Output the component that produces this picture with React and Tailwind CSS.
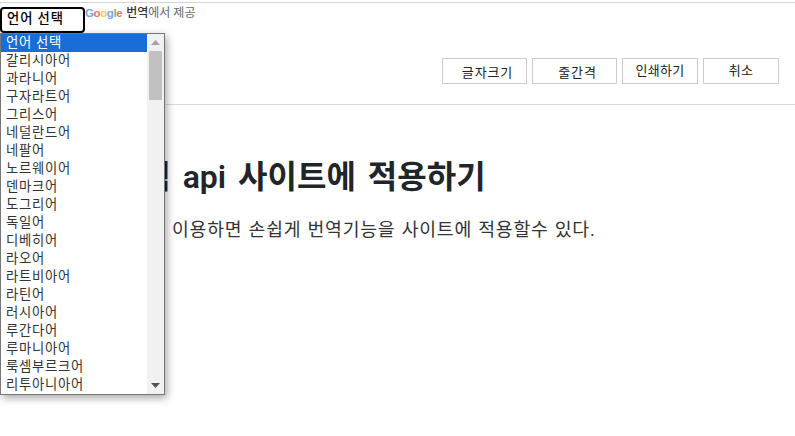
import React from 'react';

const languages = [
  '갈리시아어', '과라니어', '구자라트어', '그리스어', '네덜란드어', '네팔어', '노르웨이어', '덴마크어',
  '도그리어', '독일어', '디베히어', '라오어', '라트비아어', '라틴어', '러시아어', '루간다어', '루마니아어',
  '룩셈부르크어', '리투아니아어',
];

const buttons = [
  { label: '글자크기', width: 'w-[85px]', extra: 'pl-[6px] pt-[2px] tracking-[0.9px]' },
  { label: '줄간격', width: 'w-[85px]', extra: 'pl-[6px] pt-[2px] tracking-[0.9px]' },
  { label: '인쇄하기', width: 'w-[76px]', extra: 'pb-[2px] tracking-[0.3px]' },
  { label: '취소', width: 'w-[76px]', extra: 'pb-[2px] tracking-[0.3px]' },
];

const App = () => {
  return (
    <div className="relative w-[795px] h-[436px] overflow-hidden bg-white text-[#212529] font-['Roboto','Noto_Sans_CJK_KR',sans-serif]">
      {/* Google translate bar */}
      <div className="h-[33px] pt-[2px]">
        <div className="border-t border-[#d4d4d4] flex items-start pt-[4px]">
          <div className="w-[85px] h-[26px] border-2 border-black rounded-[4px] pl-[5px] text-[13.33px] leading-[20px] font-medium tracking-[0.9px] text-black">
            언어 선택
          </div>
          <div className="flex items-center h-[12px] text-[12px] leading-[12px] text-[#666]">
            <span className="text-[11.5px] font-bold tracking-[-0.4px] font-['Liberation_Sans',sans-serif] opacity-75">
              <span className="text-[#4285f4]">G</span>
              <span className="text-[#ea4335]">o</span>
              <span className="text-[#fbbc05]">o</span>
              <span className="text-[#4285f4]">g</span>
              <span className="text-[#34a853]">l</span>
              <span className="text-[#ea4335]">e</span>
            </span>
            <span className="ml-[4px] font-medium text-[#333]">번역</span>
            <span>에서 제공</span>
          </div>
        </div>
      </div>

      {/* Toolbar */}
      <div className="h-[72px] border-b border-[#d9d9d9] flex justify-end items-start pt-[25px] pr-[16px] gap-[5px]">
        {buttons.map((b) => (
          <button
            key={b.label}
            className={`${b.width} ${b.extra} h-[26px] bg-white border border-[#ccc] text-[13px] leading-none text-[#222] flex items-center justify-center`}
          >
            {b.label}
          </button>
        ))}
      </div>

      {/* Post */}
      <div className="pl-[41px] pt-[50px]">
        <h1 className="text-[32px] leading-[44px] font-semibold text-[#212529] whitespace-nowrap [word-spacing:4px]">구글 번역 api 사이트에 적용하기</h1>
        <p className="mt-[17px] pl-[131px] text-[18.3px] leading-[28px] tracking-[0.75px] [word-spacing:1px] text-[#333] whitespace-nowrap">
          이용하면 손쉽게 번역기능을 사이트에 적용할수 있다.
        </p>
      </div>

      {/* Open select list */}
      <div className="absolute left-0 top-[33px] w-[165px] h-[362px] bg-white border border-[#767676] flex shadow-[2px_3px_8px_rgba(0,0,0,0.35)] overflow-hidden">
        <ul className="flex-1 min-w-0 text-[13.33px] leading-[18px] tracking-[0.75px] text-[#333]">
          <li className="h-[18px] pl-[5px] bg-[#1a6cd8] text-white">언어 선택</li>
          {languages.map((lang) => (
            <li key={lang} className="h-[18px] pl-[5px]">{lang}</li>
          ))}
        </ul>
        <div className="w-[17px] shrink-0 bg-[#f1f1f1] flex flex-col items-center">
          <svg className="mt-[6px] shrink-0" width="9" height="5" viewBox="0 0 9 5">
            <path d="M4.5 0L9 5H0z" fill="#a3a3a3" />
          </svg>
          <div className="mt-[6px] w-[13px] h-[49px] bg-[#c1c1c1]" />
          <svg className="mt-auto mb-[6px] shrink-0" width="9" height="5" viewBox="0 0 9 5">
            <path d="M0 0H9L4.5 5z" fill="#505050" />
          </svg>
        </div>
      </div>
    </div>
  );
};

export default App;
